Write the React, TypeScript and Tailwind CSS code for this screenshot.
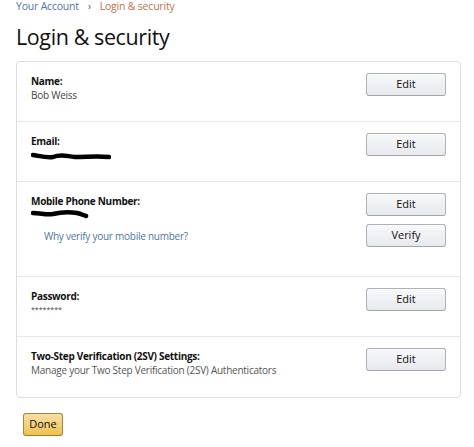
import React from 'react'

const font = { fontFamily: '"Open Sans", Arial, sans-serif' }

const EditButton = ({ label = 'Edit' }: { label?: string }) => (
  <button className="w-[80px] h-[23px] rounded-[3px] border border-[#adb1b8] border-b-[#a2a6ac] bg-gradient-to-b from-[#f7f8fa] to-[#e7e9ec] text-[11px] text-[#111] shadow-[inset_0_1px_0_rgba(255,255,255,0.6)]">
    {label}
  </button>
)

const Scribble = ({ width, d }: { width: number; d: string }) => (
  <svg width={width} height="10" viewBox={`0 0 ${width} 10`} className="block">
    <path d={d} stroke="#000" strokeWidth="4.5" strokeLinecap="round" fill="none" />
  </svg>
)

const Row = ({
  title,
  children,
  buttons,
  tall,
  last,
}: {
  title: string
  children?: React.ReactNode
  buttons: React.ReactNode
  tall?: boolean
  last?: boolean
}) => (
  <div className={`flex justify-between px-[14px] pt-[11px] ${tall ? 'h-[95px]' : 'h-[60px]'} ${last ? '' : 'border-b border-[#e7e7e7]'}`}>
    <div className="pt-[1px]">
      <div className="text-[10px] leading-[14px] font-bold text-[#111] tracking-[-0.3px]">{title}</div>
      {children}
    </div>
    <div className="flex flex-col gap-[8px]">{buttons}</div>
  </div>
)

export default function App() {
  return (
    <div className="w-[474px] h-[447px] bg-white overflow-hidden px-[16px]" style={font}>
      <div className="flex items-center gap-[9px] pt-[1px] text-[10.5px] leading-[10px] tracking-[-0.2px]">
        <span className="text-[#4f74ab]">Your Account</span>
        <span className="text-[#555] text-[10px]">›</span>
        <span className="text-[#c4714f]">Login &amp; security</span>
      </div>
      <h1 className="text-[21.5px] leading-[28px] text-[#111] tracking-[-0.4px] mt-[12px] mb-[10px]">Login &amp; security</h1>

      <div className="w-[445px] border border-[#ddd] rounded-[4px]">
        <Row title="Name:" buttons={<EditButton />}>
          <div className="text-[10px] leading-[14px] text-[#444] tracking-[-0.25px]">Bob Weiss</div>
        </Row>
        <Row title="Email:" buttons={<EditButton />}>
          <div className="mt-[3px]">
            <Scribble width={80} d="M2 4 C10 5 14 7 22 6 C30 3 34 5 44 6 C56 6 66 5 78 6" />
          </div>
        </Row>
        <Row
          title="Mobile Phone Number:"
          tall
          buttons={
            <>
              <EditButton />
              <EditButton label="Verify" />
            </>
          }
        >
          <div className="mt-[1px]">
            <Scribble width={58} d="M2 4 C10 4 14 6 22 5 C30 3 40 3 46 4 C50 5 52 6 55 7" />
          </div>
          <div className="text-[10px] leading-[14px] text-[#4f74ab] tracking-[-0.25px] mt-[10px] ml-[13px]">Why verify your mobile number?</div>
        </Row>
        <Row title="Password:" buttons={<EditButton />}>
          <div className="text-[7px] leading-[14px] text-[#444]">********</div>
        </Row>
        <Row title="Two-Step Verification (2SV) Settings:" last buttons={<EditButton />}>
          <div className="text-[10px] leading-[14px] text-[#555] tracking-[-0.25px]">Manage your Two Step Verification (2SV) Authenticators</div>
        </Row>
      </div>

      <button className="mt-[15px] ml-[7px] w-[40px] h-[23px] rounded-[3px] border border-[#a88734] border-b-[#9c7e31] bg-gradient-to-b from-[#f7dfa5] to-[#f0c14b] text-[11px] text-[#111]">
        Done
      </button>
    </div>
  )
}
